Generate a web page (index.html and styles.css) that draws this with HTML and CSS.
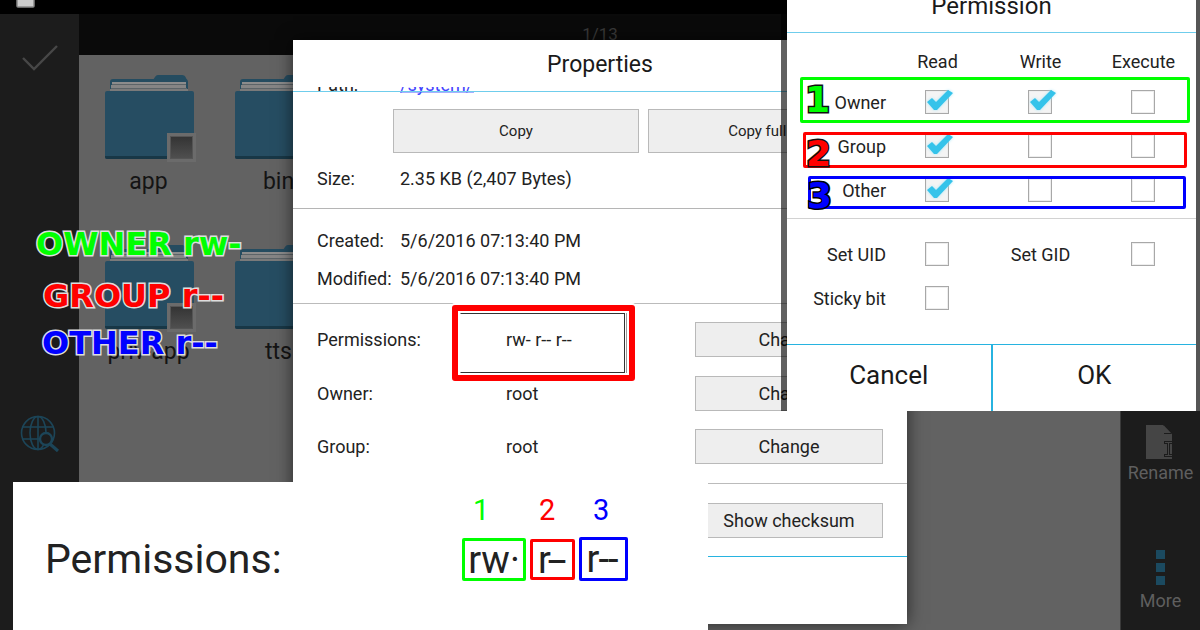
FILE: index.html
```html
<!DOCTYPE html>
<html lang="en">
<head>
<meta charset="utf-8">
<title>File permissions</title>
<link rel="stylesheet" href="styles.css">
</head>
<body>
<svg class="defs" width="0" height="0" aria-hidden="true">
  <symbol id="folder" viewBox="0 0 90 84">
    <path d="M48 5l2-3q1-2 3-2h24q3 0 4 3l1 2z" fill="#254c60"/>
    <path d="M5 18V7q0-3 3-3h72q3 0 3 3v11z" fill="#254c60"/>
    <path d="M7 7h74v2H7z" fill="#8c8c8c"/>
    <path d="M7 9h74v1H7z" fill="#5c6468"/>
    <path d="M6 10h75v3H6z" fill="#858585"/>
    <path d="M6 13h76v1H6z" fill="#5c6468"/>
    <path d="M5 14h78v2H5z" fill="#7a7a7a"/>
    <path d="M0 18q0-2 2-2h85q2 0 2 2v64q0 2-2 2H2q-2 0-2-2z" fill="#264d62"/>
    <path d="M0 81h89v1q0 2-2 2H2q-2 0-2-2z" fill="#183746"/>
  </symbol>
  <symbol id="tick" viewBox="0 0 30 22">
    <path d="M2 13l5-4 4 4L23 1l5 3-16 17H9z" fill="#35c3ea"/>
  </symbol>
</svg>

<div class="app">
  <div class="statusbar">
    <svg class="status-icon" viewBox="0 0 20 8" width="20" height="8"><path d="M1 0v6q0 1 1 1h15q1 0 1-1V0" fill="#ccc" stroke="#888" stroke-width="1.5"/></svg>
  </div>
  <div class="screen">
    <aside class="rail rail-left">
      <svg class="rail-check" viewBox="0 0 36 26" width="36" height="26"><path d="M1 13l11 11L35 1" fill="none" stroke="#474747" stroke-width="2.4"/></svg>
      <svg class="rail-globe" viewBox="0 0 40 37" width="40" height="37" fill="none" stroke="#1c4558" stroke-width="1.6">
        <circle cx="18" cy="18" r="16.5"/><ellipse cx="18" cy="18" rx="8" ry="16.5"/><path d="M18 1.500V34.500M2 12h32M2 24h22"/>
        <circle cx="26" cy="24" r="6" fill="#1c1c1c" stroke-width="2.400"/><path d="M30 29l8 7" stroke-width="3.200"/>
      </svg>
    </aside>
    <main class="browser">
      <div class="toolbar"><span class="pager">1/13</span></div>
      <div class="grid">
        <div class="file"><svg class="folder" width="90" height="84"><use href="#folder"/></svg><span class="lock"></span><span class="file-name">app</span></div>
        <div class="file"><svg class="folder" width="90" height="84"><use href="#folder"/></svg><span class="file-name">bin</span></div>
        <div class="file"><svg class="folder" width="90" height="84"><use href="#folder"/></svg><span class="lock"></span><span class="file-name">priv-app</span></div>
        <div class="file"><svg class="folder" width="90" height="84"><use href="#folder"/></svg><span class="file-name">tts</span></div>
      </div>
    </main>
    <aside class="rail rail-right">
      <div class="action action-rename">
        <svg viewBox="0 0 30 36" width="30" height="36"><path d="M1 1h17l9 9v25H1z" fill="#454545"/><path d="M19 1l8 9h-8z" fill="#1c1c1c"/><path d="M19 1.500l7 7.500h-7z" fill="#454545"/><path d="M19 17h9v3h-3v10h3v3h-9v-3h3V20h-3z" fill="#1c1c1c"/><path d="M20 18h7v1h-3v12h3v1h-7v-1h3V19h-3z" fill="#454545"/></svg>
        <span>Rename</span>
      </div>
      <div class="action action-more">
        <div class="dots"><i></i><i></i><i></i></div>
        <span>More</span>
      </div>
    </aside>
  </div>
</div>

<section class="properties">
  <h2 class="dialog-title">Properties</h2>
  <div class="prop-body">
    <div class="path-row"><span class="path-label">Path:</span><a class="path-link">/system/</a></div>
    <div class="copy-row"><button class="btn btn-copy">Copy</button><button class="btn btn-copy btn-copy-full">Copy full path</button></div>
    <div class="size-row"><span class="prop-label">Size:</span><span>2.35 KB (2,407 Bytes)</span></div>
    <div class="dates">
      <div class="date-row"><span class="prop-label">Created:</span><span>5/6/2016 07:13:40 PM</span></div>
      <div class="date-row"><span class="prop-label">Modified:</span><span>5/6/2016 07:13:40 PM</span></div>
    </div>
    <div class="owner-block">
      <div class="own-row"><span class="own-label">Permissions:</span><span class="own-value">rw- r-- r--</span><button class="btn btn-change">Change</button></div>
      <div class="own-row"><span class="own-label">Owner:</span><span class="own-value">root</span><button class="btn btn-change">Change</button></div>
      <div class="own-row"><span class="own-label">Group:</span><span class="own-value">root</span><button class="btn btn-change">Change</button></div>
    </div>
    <div class="checksum-row"><button class="btn btn-change btn-checksum">Show checksum</button></div>
  </div>
  <span class="mark-red"><span class="mark-inner"></span></span>
</section>

<section class="permission">
  <div class="perm-panel">
    <h2 class="perm-title">Permission</h2>
    <div class="perm-grid perm-head"><span></span><span>Read</span><span>Write</span><span>Execute</span></div>
    <div class="perm-grid perm-row perm-row-owner"><span class="perm-label">Owner</span><span class="cell"><i class="box on"><svg class="tick" width="30" height="22"><use href="#tick"/></svg></i></span><span class="cell"><i class="box on"><svg class="tick" width="30" height="22"><use href="#tick"/></svg></i></span><span class="cell"><i class="box"></i></span></div>
    <div class="perm-grid perm-row"><span class="perm-label">Group</span><span class="cell"><i class="box on"><svg class="tick" width="30" height="22"><use href="#tick"/></svg></i></span><span class="cell"><i class="box"></i></span><span class="cell"><i class="box"></i></span></div>
    <div class="perm-grid perm-row"><span class="perm-label">Other</span><span class="cell"><i class="box on"><svg class="tick" width="30" height="22"><use href="#tick"/></svg></i></span><span class="cell"><i class="box"></i></span><span class="cell"><i class="box"></i></span></div>
    <div class="perm-special">
      <div class="perm-grid perm-row"><span class="perm-label">Set UID</span><span class="cell"><i class="box"></i></span><span class="cell cell-text">Set GID</span><span class="cell"><i class="box"></i></span></div>
      <div class="perm-grid perm-row"><span class="perm-label">Sticky bit</span><span class="cell"><i class="box"></i></span></div>
    </div>
    <div class="perm-actions"><span>Cancel</span><span>OK</span></div>
  </div>
  <span class="frame frame-green"></span><span class="frame frame-red"></span><span class="frame frame-blue"></span>
  <span class="num num-1">1</span><span class="num num-2">2</span><span class="num num-3">3</span>
</section>

<section class="zoom-panel">
  <span class="zoom-label">Permissions:</span>
  <div class="zoom-parts">
    <div class="part part-green"><span class="part-num">1</span><span class="part-text">rw·</span></div>
    <div class="part part-red"><span class="part-num">2</span><span class="part-text">r--</span></div>
    <div class="part part-blue"><span class="part-num">3</span><span class="part-text">r--</span></div>
  </div>
</section>

<div class="legend legend-owner">OWNER rw-</div>
<div class="legend legend-group">GROUP r--</div>
<div class="legend legend-other">OTHER r--</div>
</body>
</html>
```

FILE: styles.css
```css
* { box-sizing: border-box; }
html, body { margin: 0; padding: 0; }
body {
  width: 1200px; height: 630px; overflow: hidden; position: relative;
  background: #626262; font-family: Roboto, "Noto Sans", sans-serif; color: #111;
}
.defs { position: absolute; }
h2 { margin: 0; font-weight: 400; }
button { font: inherit; color: inherit; }

/* Back screen */
.app { display: flex; flex-direction: column; width: 1200px; height: 630px; }
.statusbar { height: 14px; background: #000; flex: none; padding-left: 16px; }
.status-icon { display: block; }
.screen { flex: 1; display: flex; min-height: 0; }
.rail { width: 79px; flex: none; background: #1c1c1c; }
.rail-left { display: flex; flex-direction: column; align-items: center; box-shadow: 1px 0 0 #2a2a2a; }
.rail-check { margin-top: 31px; }
.rail-globe { margin-top: 344px; }
.browser { flex: 1; display: flex; flex-direction: column; background: #626262; }
.toolbar { height: 41px; background: #0a0a0a; text-align: center; flex: none; }
.pager { display: block; padding-top: 11px; color: #3a3a3a; font-size: 17px; line-height: 19px; }
.grid { display: grid; grid-template-columns: repeat(2, 130px); grid-auto-rows: 170px; padding: 20px 0 0 5px; }
.file { position: relative; display: flex; flex-direction: column; align-items: center; }
.folder { display: block; margin-left: 1px; }
.lock {
  position: absolute; left: 83px; top: 58px; width: 29px; height: 29px;
  background: linear-gradient(#333, #505050); border: 3px solid #6b6b6b; box-shadow: inset 0 0 0 1px #555;
}
.file-name { margin-top: 8px; font-size: 23px; line-height: 30px; color: #141414; margin-left: -1px; }

.rail-right { display: flex; flex-direction: column; align-items: center; box-shadow: -1px 0 0 #3a3a3a; color: #5f5f5f; font-size: 18px; }
.action { display: flex; flex-direction: column; align-items: center; }
.action span { line-height: 22px; }
.action-rename { margin-top: 410px; }
.action-rename svg { display: block; margin-bottom: 2px; }
.action-more { margin-top: 66px; }
.dots { display: flex; flex-direction: column; gap: 4px; margin-bottom: 5px; }
.dots i { display: block; width: 9px; height: 9px; background: #1b4a60; }

/* Properties */
.properties {
  position: absolute; left: 293px; top: 40px; width: 614px; height: 584px; isolation: isolate;
  background: #fff; box-shadow: 0 0 16px rgba(0,0,0,.6); font-size: 18px; color: #222;
}
.dialog-title { position: relative; z-index: 1; height: 47px; line-height: 49px; text-align: center; font-size: 23px; color: #1a1a1a; background: #fff; }
.dialog-title::after { content: ""; position: absolute; left: 0; right: 0; top: 51px; height: 1px; background: #6fcdec; }
.prop-body { padding-left: 24px; }
.path-row { height: 18px; margin-top: -11px; display: flex; line-height: 18px; }
.path-label { width: 83px; }
.path-link { display: block; width: 74px; height: 17px; color: #44f; border-bottom: 2px solid #a8aeff; }
.copy-row { display: flex; gap: 9px; margin: 15px 0 0 76px; width: 600px; height: 44px; overflow: hidden; }
.btn { background: #eee; border: 1px solid #b9b9b9; padding: 0; flex: none; }
.btn-copy { width: 246px; height: 44px; font-size: 15px; }
.btn-copy-full { width: 252px; }
.size-row { display: flex; height: 56px; margin-left: -24px; padding: 15px 0 0 24px; line-height: 22px; border-bottom: 1px solid #b5b5b5; }
.size-row .prop-label { width: 83px; }
.dates { margin-left: -24px; padding: 12px 0 0 24px; height: 95px; border-bottom: 1px solid #bbb; }
.date-row { display: flex; height: 38px; align-items: center; }
.date-row .prop-label { width: 83px; }
.owner-block { padding-top: 9px; height: 180px; margin-left: -24px; padding-left: 24px; border-bottom: 1px solid #bbb; }
.own-row { display: flex; height: 53.500px; align-items: center; }
.own-label { width: 189px; }
.own-value { width: 189px; }
.btn-change { width: 188px; height: 35px; font-size: 18px; }
.checksum-row { margin-left: -24px; padding: 19px 0 18px 402px; height: 73px; border-bottom: 1px solid #27b3e0; }
.btn-checksum { display: block; text-align: center; }
.mark-red {
  position: absolute; left: 159px; top: 265px; width: 183px; height: 76px;
  border: 6px solid #f00; border-radius: 3px; box-shadow: 0 0 0 2px #fff;
}
.mark-inner { position: absolute; left: 2px; top: 2px; width: 165px; height: 60px; border: 1px solid #333; border-left-color: transparent; box-shadow: 1px 0 0 #fff, 2px 0 0 #999; }

/* Permission */
.permission {
  position: absolute; left: 781px; top: 0; width: 419px; height: 411px;
  border-left: 6px solid rgba(0,0,0,.62); border-right: 4px solid #555;
}
.perm-panel { height: 411px; background: #fff; font-size: 18px; color: #222; display: flex; flex-direction: column; }
.perm-title { margin-top: -8px; height: 41px; line-height: 29px; text-align: center; font-size: 24px; color: #1a1a1a; border-bottom: 1px solid #6fcdec; flex: none; }
.perm-grid { display: grid; grid-template-columns: 98px repeat(3, 103px); align-items: center; }
.perm-head { height: 30px; margin-top: 14px; padding-left: 1px; text-align: center; line-height: 30px; }
.perm-row { height: 44px; }
.perm-row-owner { margin-top: 3px; }
.perm-label { text-align: right; margin-right: -1px; }
.cell { display: flex; justify-content: center; align-items: center; }
.cell-text { padding-left: 2px; }
.box { display: block; width: 24px; height: 24px; border: 1px solid #a8a8a8; box-shadow: inset 0 0 0 1px #eee; position: relative; background: #fff; }
.box.on { background: #f4f4f4; }
.tick { position: absolute; left: -1px; top: -2px; filter: drop-shadow(0 0 1.5px #a5e6f8); }
.perm-special { border-top: 1px solid #d2d2d2; margin-top: 6px; padding-top: 13px; }
.perm-actions { margin-top: auto; height: 67px; display: flex; border-top: 1px solid #27b3e0; font-size: 26px; color: #1a1a1a; }
.perm-actions span { flex: 1; text-align: center; line-height: 60px; }
.perm-actions span + span { border-left: 2px solid #27b3e0; }
.frame { position: absolute; border-radius: 2px; }
.frame-green { left: 13px; top: 77px; width: 390px; height: 46px; border: 3px solid #0f0; }
.frame-red { left: 16px; top: 132px; width: 384px; height: 36px; border: 3px solid #f00; }
.frame-blue { left: 21px; top: 176px; width: 378px; height: 33px; border: 3px solid #00f; }
.num {
  position: absolute; font-family: "DejaVu Sans", sans-serif; font-weight: 700; font-size: 36px; line-height: 36px;
  -webkit-text-stroke: 3px #111; paint-order: stroke fill;
}
.num-1 { left: 18px; top: 82px; color: #0f0; }
.num-2 { left: 19px; top: 136px; color: #f00; }
.num-3 { left: 20px; top: 178px; color: #00f; -webkit-text-stroke-color: #000; }

/* Magnified crop */
.zoom-panel { position: absolute; left: 13px; top: 482px; width: 695px; height: 148px; background: #fff; }
.zoom-label { position: absolute; left: 32px; top: 53px; font-size: 41px; line-height: 48px; color: #222; }
.zoom-parts { display: flex; position: absolute; left: 449px; top: 56px; gap: 4px; align-items: flex-start; }
.part { position: relative; height: 43px; border: 3px solid; border-radius: 2px; display: flex; align-items: center; justify-content: center; font-size: 38px; color: #222; }
.part-text { line-height: 36px; white-space: nowrap; }
.part-num { position: absolute; font-size: 29px; line-height: 32px; }
.part-green { width: 64px; border-color: #0f0; }
.part-green .part-num { color: #0f0; left: 8px; top: -47px; }
.part-red { width: 45px; height: 41px; margin-top: 1px; padding-right: 4px; border-color: #f00; letter-spacing: -3px; }
.part-red .part-num { color: #f00; left: 6px; top: -48px; letter-spacing: 0; }
.part-blue { width: 49px; height: 44px; margin-top: -1px; padding-right: 3px; border-color: #00f; letter-spacing: -1px; }
.part-blue .part-num { color: #00f; left: 11px; top: -46px; letter-spacing: 0; }

/* Legend */
.legend {
  position: absolute; font-family: "DejaVu Sans", sans-serif; font-weight: 700; font-size: 32px; line-height: 36px; white-space: nowrap;
  -webkit-text-stroke: 3px #ddd; paint-order: stroke fill;
}
.legend-owner { left: 36px; top: 226px; color: #0f0; }
.legend-group { left: 43px; top: 278px; color: #f00; }
.legend-other { left: 42px; top: 325px; color: #00f; }
```
